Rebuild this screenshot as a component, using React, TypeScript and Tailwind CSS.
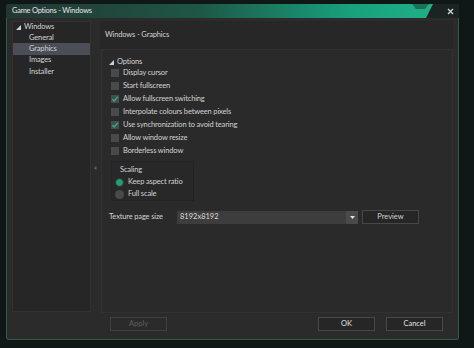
import React from "react";

const font = { fontFamily: 'Lato, "Open Sans", sans-serif' };

function Tri() {
  return (
    <svg width="5" height="5" viewBox="0 0 5 5" className="shrink-0">
      <polygon points="5,0 5,5 0,5" fill="#d0d0d0" />
    </svg>
  );
}

function Check({ checked, label }: { checked?: boolean; label: string }) {
  return (
    <div className="flex items-center h-[13px] gap-[4px]">
      <div className="w-[8px] h-[8px] bg-[#4a4a4a] flex items-center justify-center">
        {checked && (
          <svg width="8" height="8" viewBox="0 0 8 8">
            <polyline points="1.3,4.2 3.2,6 6.8,1.8" fill="none" stroke="#23b486" strokeWidth="1.4" />
          </svg>
        )}
      </div>
      <span className="text-[7.5px] tracking-[-0.15px] text-[#d2d2d2] leading-none">{label}</span>
    </div>
  );
}

function Radio({ on, label }: { on?: boolean; label: string }) {
  return (
    <div className="flex items-center h-[12px] gap-[4px]">
      <div
        className={
          on
            ? "w-[9px] h-[9px] rounded-full bg-[#1fa077] border border-[#3a2a2a]"
            : "w-[9px] h-[9px] rounded-full bg-[#4a4a4a]"
        }
      />
      <span className="text-[7.5px] tracking-[-0.15px] text-[#d2d2d2] leading-none">{label}</span>
    </div>
  );
}

export default function App() {
  return (
    <div className="w-[474px] h-[348px] bg-[#0f1817] overflow-hidden pt-[4px] pl-[6px]" style={font}>
      <div className="w-[453px] h-[336px] flex flex-col">
        {/* title bar */}
        <div className="relative h-[14px] shrink-0">
          <svg className="absolute inset-0" width="453" height="14" viewBox="0 0 453 14">
            <defs>
              <linearGradient id="tg" x1="0" y1="0" x2="1" y2="0">
                <stop offset="0" stopColor="#243633" />
                <stop offset="0.45" stopColor="#1e5647" />
                <stop offset="0.8" stopColor="#18a07b" />
                <stop offset="1" stopColor="#1fb088" />
              </linearGradient>
            </defs>
            <path d="M2,0 H453 V14 H0 V2 Q0,0 2,0 Z" fill="#1b2422" />
            <path d="M2,0 H427 L420,14 H0 V2 Q0,0 2,0 Z" fill="url(#tg)" />
            <path d="M406,0 L410,5 H419 L423,0 Z" fill="#1d6f59" />
          </svg>
          <div className="relative flex items-center h-full pl-[6px] justify-between pr-[5px]">
            <span className="text-[7.5px] tracking-[-0.25px] text-[#e6e6e6] leading-none">Game Options - Windows</span>
            <svg width="7" height="7" viewBox="0 0 7 7">
              <path d="M1,1 L6,6 M6,1 L1,6" stroke="#d8d8d8" strokeWidth="1.2" />
            </svg>
          </div>
        </div>
        {/* body */}
        <div className="flex-1 flex flex-col bg-[#2b2b2b] border border-t-0 border-[#2f5a48] rounded-b-[3px]">
          <div className="flex h-[295px] pt-[3px] pl-[5px] pr-[5px]">
            {/* tree */}
            <div className="w-[79px] h-[291px] bg-[#262626] border border-[#313131] shrink-0">
              <div className="flex items-center h-[10px] pl-[3px] gap-[3px]">
                <Tri />
                <span className="text-[7.5px] tracking-[-0.15px] text-[#d2d2d2] leading-none">Windows</span>
              </div>
              {["General", "Graphics", "Images", "Installer"].map((t) => (
                <div
                  key={t}
                  className={
                    t === "Graphics"
                      ? "h-[11.3px] flex items-center pl-[16px] bg-[#4b4e56]"
                      : "h-[11.3px] flex items-center pl-[16px]"
                  }
                >
                  <span className="text-[7.5px] tracking-[-0.15px] text-[#d2d2d2] leading-none">{t}</span>
                </div>
              ))}
            </div>
            {/* collapse */}
            <div className="w-[9px] shrink-0 flex items-center justify-center">
              <span className="text-[7px] text-[#8a8a8a] leading-none">«</span>
            </div>
            {/* right */}
            <div className="flex-1 flex flex-col">
              <div className="h-[28px] flex items-center pl-[5px] bg-[#272727]">
                <span className="text-[7.5px] tracking-[-0.15px] text-[#d2d2d2] leading-none">Windows - Graphics</span>
              </div>
              <div className="flex-1 ml-[1px] bg-[#2a2a2a] border border-[#313131] pl-[7px] pt-[7px]">
                <div className="flex items-center h-[10px] gap-[3px]">
                  <Tri />
                  <span className="text-[7.5px] tracking-[-0.15px] text-[#d2d2d2] leading-none">Options</span>
                </div>
                <div className="pl-[2px] -mt-[1px] flex flex-col">
                  <Check label="Display cursor" />
                  <Check label="Start fullscreen" />
                  <Check checked label="Allow fullscreen switching" />
                  <Check label="Interpolate colours between pixels" />
                  <Check checked label="Use synchronization to avoid tearing" />
                  <Check label="Allow window resize" />
                  <Check label="Borderless window" />
                </div>
                <div className="ml-[2px] mt-[4px] w-[83px] h-[40px] border border-[#232323] bg-[#282828] pl-[3px] pt-[3px]">
                  <div className="pl-[5px] h-[9px] flex items-center">
                    <span className="text-[7.5px] tracking-[-0.15px] text-[#d2d2d2] leading-none">Scaling</span>
                  </div>
                  <div className="mt-[2px] flex flex-col">
                    <Radio on label="Keep aspect ratio" />
                    <Radio label="Full scale" />
                  </div>
                </div>
                <div className="flex items-center mt-[9px] h-[14px]">
                  <span className="w-[68px] text-[7.5px] tracking-[-0.15px] text-[#d2d2d2] leading-none">Texture page size</span>
                  <div className="w-[181px] h-[13px] bg-[#3d3d3d] flex items-center">
                    <span className="flex-1 pl-[3px] text-[7.5px] text-[#dcdcdc] leading-none">8192x8192</span>
                    <div className="w-[12px] h-full bg-[#4a4a4a] flex items-center justify-center">
                      <svg width="5" height="3" viewBox="0 0 5 3">
                        <polygon points="0,0 5,0 2.5,3" fill="#e0e0e0" />
                      </svg>
                    </div>
                  </div>
                  <div className="ml-[4px] w-[57px] h-[14px] border border-[#474747] bg-[#262626] flex items-center justify-center">
                    <span className="text-[7.5px] text-[#d2d2d2] leading-none">Preview</span>
                  </div>
                </div>
              </div>
            </div>
          </div>
          {/* buttons */}
          <div className="flex items-center mt-[4px] pl-[103px] pr-[15px]">
            <div className="w-[57px] h-[14px] border border-[#404040] flex items-center justify-center">
              <span className="text-[7.5px] text-[#5e5e5e] leading-none">Apply</span>
            </div>
            <div className="flex-1" />
            <div className="w-[57px] h-[14px] border border-[#474747] bg-[#262626] flex items-center justify-center">
              <span className="text-[7.5px] text-[#e0e0e0] leading-none">OK</span>
            </div>
            <div className="ml-[11px] w-[57px] h-[14px] border border-[#474747] bg-[#262626] flex items-center justify-center">
              <span className="text-[7.5px] text-[#e0e0e0] leading-none">Cancel</span>
            </div>
          </div>
        </div>
      </div>
    </div>
  );
}
